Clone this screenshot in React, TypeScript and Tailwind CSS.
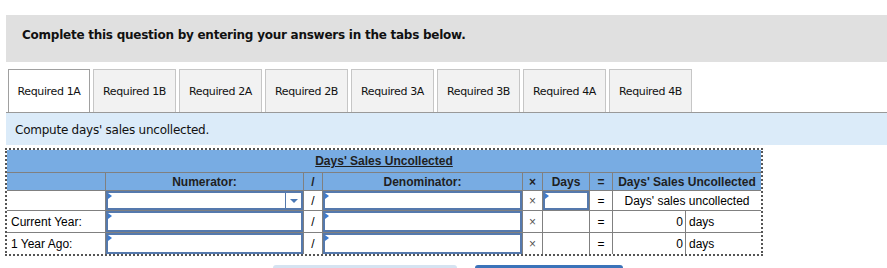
import React from "react";

const tabs = [
  "Required 1A",
  "Required 1B",
  "Required 2A",
  "Required 2B",
  "Required 3A",
  "Required 3B",
  "Required 4A",
  "Required 4B",
];

function Field({ dropdown }: { dropdown?: boolean }) {
  return (
    <div className="relative flex h-full w-full border-2 border-[#5579ad] bg-white">
      <span className="absolute left-0 top-0 h-0 w-0 border-y-[3px] border-l-[4px] border-y-transparent border-l-[#3b7bd0]" />
      {dropdown && (
        <div className="ml-auto flex w-[16px] items-center justify-center border-l border-[#5579ad]">
          <span className="h-0 w-0 border-x-[4px] border-t-[4px] border-x-transparent border-t-[#4a78b5]" />
        </div>
      )}
    </div>
  );
}

const hd = "flex items-center justify-center bg-[#78ace3] font-bold text-[#1f1f1f]";
const cell = "flex items-center bg-white text-[#000]";

export default function App() {
  return (
    <div className="relative h-[268px] w-[887px] overflow-hidden bg-white">
      <div className="ml-[6px] pt-[15px]">
        <div
          className="h-[47px] bg-[#e0e0e0] pl-[16px] pt-[10px] text-[12px] font-bold leading-[20px] tracking-[-0.25px] text-[#111]"
          style={{ fontFamily: '"DejaVu Sans", Verdana, sans-serif' }}
        >
          Complete this question by entering your answers in the tabs below.
        </div>
        <div
          className="mt-[7px] flex gap-[3px] border-b border-[#999] pl-[2px] text-[11px] tracking-[-0.35px] text-[#111]"
          style={{ fontFamily: '"DejaVu Sans", Verdana, sans-serif' }}
        >
          {tabs.map((t, i) => (
            <div
              key={t}
              className={
                i === 0
                  ? "flex h-[43px] w-[82px] items-center justify-center border border-b-0 border-[#a0a0a0] bg-white pt-[3px]"
                  : "flex h-[43px] w-[83px] items-center justify-center border border-b-0 border-[#c6c6c6] bg-[#f2f2f2] pt-[3px]"
              }
            >
              {t}
            </div>
          ))}
        </div>
        <div
          className="flex h-[32px] items-center bg-[#dbebf9] pl-[9px] pt-[2px] text-[12px] tracking-[-0.24px] text-[#111]"
          style={{ fontFamily: '"DejaVu Sans", Verdana, sans-serif' }}
        >
          Compute days' sales uncollected.
        </div>
      </div>

      <div
        className="ml-[5px] mt-[3px] w-[758px] border-2 border-dotted border-[#555] text-[12px] leading-none"
        style={{ fontFamily: '"Liberation Sans", Arial, sans-serif' }}
      >
        <div className="grid grid-cols-[98px_197px_18px_199px_19px_46px_22px_72px_75px] grid-rows-[22px_17px_19px_21px_21px] gap-px bg-[#808080]">
          {/* row 1 */}
          <div className={`${hd} col-span-9`}>
            <span className="underline">Days' Sales Uncollected</span>
          </div>
          {/* row 2 */}
          <div className={hd}></div>
          <div className={hd}>Numerator:</div>
          <div className={hd}>/</div>
          <div className={hd}>Denominator:</div>
          <div className={hd}>×</div>
          <div className={hd}>Days</div>
          <div className={hd}>=</div>
          <div className={`${hd} col-span-2`}>Days' Sales Uncollected</div>
          {/* row 3 */}
          <div className={cell}></div>
          <div className="bg-white">
            <Field dropdown />
          </div>
          <div className={`${cell} justify-center`}>/</div>
          <div className="bg-white">
            <Field />
          </div>
          <div className={`${cell} justify-center text-[12px] text-[#555]`}>×</div>
          <div className="bg-white">
            <Field />
          </div>
          <div className={`${cell} justify-center`}>=</div>
          <div className={`${cell} col-span-2 justify-center`}>Days' sales uncollected</div>
          {/* row 4 */}
          <div className={`${cell} pl-[4px]`}>Current Year:</div>
          <div className="bg-white">
            <Field />
          </div>
          <div className={`${cell} justify-center`}>/</div>
          <div className="bg-white">
            <Field />
          </div>
          <div className={`${cell} justify-center text-[12px] text-[#555]`}>×</div>
          <div className={cell}></div>
          <div className={`${cell} justify-center`}>=</div>
          <div className={`${cell} justify-end pr-[2px]`}>0</div>
          <div className={`${cell} pl-[3px]`}>days</div>
          {/* row 5 */}
          <div className={`${cell} pl-[4px]`}>1 Year Ago:</div>
          <div className="bg-white">
            <Field />
          </div>
          <div className={`${cell} justify-center`}>/</div>
          <div className="bg-white">
            <Field />
          </div>
          <div className={`${cell} justify-center text-[12px] text-[#555]`}>×</div>
          <div className={cell}></div>
          <div className={`${cell} justify-center`}>=</div>
          <div className={`${cell} justify-end pr-[2px]`}>0</div>
          <div className={`${cell} pl-[3px]`}>days</div>
        </div>
      </div>

      <div className="mt-[9px] flex gap-[18px] pl-[273px]">
        <div className="h-[30px] w-[184px] rounded-t-[3px] bg-[#d5e3f1]" />
        <div className="h-[30px] w-[148px] rounded-t-[3px] bg-[#3b73b9]" />
      </div>
    </div>
  );
}
